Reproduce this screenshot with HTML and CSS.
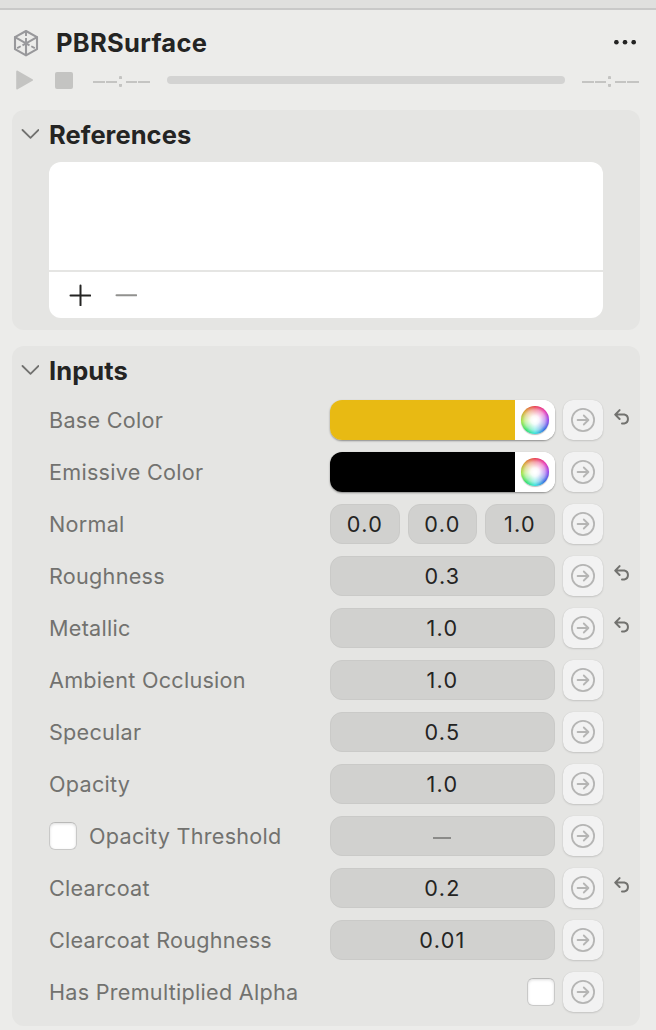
FILE: index.html
```html
<!DOCTYPE html>
<html lang="en">
<head>
<meta charset="utf-8">
<title>PBRSurface</title>
<link rel="stylesheet" href="styles.css">
</head>
<body>
<svg class="defs" aria-hidden="true">
  <symbol id="chevron" viewBox="0 0 18 12"><path d="M1.5 2 9.5 9.8 17.5 2"/></symbol>
  <symbol id="link" viewBox="0 0 24 24"><circle cx="12" cy="12" r="11.1"/><path d="M6.6 12H17.2M12.8 7.5 17.4 12 12.8 16.5"/></symbol>
  <symbol id="undo" viewBox="0 0 16 16"><path d="M5.6 1.1 1.2 5.6 5.6 10M1.4 5.6H10.3A4.6 4.6 0 0 1 10.3 14.6H8"/></symbol>
</svg>
<div class="topbar"></div>
<main class="inspector">
  <header class="header">
    <svg class="cube" viewBox="0 0 26 28"><path d="M13 2 24 8.2V20.2L13 26.4 2 20.2V8.2Z"/><path d="M2 8.2 13 14.4 24 8.2M13 14.4V26"/><path class="dash" d="M13 3V14M13 14.4 3 19.8M13 14.4 23 19.8"/></svg>
    <h1 class="title">PBRSurface</h1>
    <svg class="more" viewBox="0 0 24 6"><circle cx="3.4" cy="2.2" r="2.3"/><circle cx="12" cy="2.2" r="2.3"/><circle cx="20.7" cy="2.2" r="2.3"/></svg>
  </header>
  <div class="player">
    <svg class="play" viewBox="0 0 18 20"><path d="M2.2 1.5 17 10 2.2 18.5Z"/></svg>
    <span class="stop"></span>
    <span class="time"><i></i><i></i><b></b><i></i><i></i></span>
    <span class="track"></span>
    <span class="time"><i></i><i></i><b></b><i></i><i></i></span>
  </div>

  <section class="card references">
    <h2 class="heading"><svg class="chevron"><use href="#chevron"/></svg>References</h2>
    <div class="list">
      <div class="list-body"></div>
      <div class="list-tools">
        <svg class="plus" viewBox="0 0 22 22"><path d="M11.5 1.5V21.3M1.5 11.5H21.3"/></svg>
        <svg class="minus" viewBox="0 0 22 22"><path d="M1.5 11.2H21.3"/></svg>
      </div>
    </div>
  </section>

  <section class="card inputs">
    <h2 class="heading"><svg class="chevron"><use href="#chevron"/></svg>Inputs</h2>
    <div class="rows">
      <div class="row"><span class="label">Base Color</span><div class="well gold"><span class="picker"><span class="wheel"></span></span></div><span class="button"><svg><use href="#link"/></svg></span><svg class="undo"><use href="#undo"/></svg></div>
      <div class="row"><span class="label">Emissive Color</span><div class="well black"><span class="picker"><span class="wheel"></span></span></div><span class="button"><svg><use href="#link"/></svg></span></div>
      <div class="row"><span class="label">Normal</span><div class="vector"><span class="field">0.0</span><span class="field">0.0</span><span class="field">1.0</span></div><span class="button"><svg><use href="#link"/></svg></span></div>
      <div class="row"><span class="label">Roughness</span><span class="field">0.3</span><span class="button"><svg><use href="#link"/></svg></span><svg class="undo"><use href="#undo"/></svg></div>
      <div class="row"><span class="label">Metallic</span><span class="field">1.0</span><span class="button"><svg><use href="#link"/></svg></span><svg class="undo"><use href="#undo"/></svg></div>
      <div class="row"><span class="label">Ambient Occlusion</span><span class="field">1.0</span><span class="button"><svg><use href="#link"/></svg></span></div>
      <div class="row"><span class="label">Specular</span><span class="field">0.5</span><span class="button"><svg><use href="#link"/></svg></span></div>
      <div class="row"><span class="label">Opacity</span><span class="field">1.0</span><span class="button"><svg><use href="#link"/></svg></span></div>
      <div class="row"><span class="label"><span class="check"></span>Opacity Threshold</span><span class="field"><span class="empty"></span></span><span class="button"><svg><use href="#link"/></svg></span></div>
      <div class="row"><span class="label">Clearcoat</span><span class="field">0.2</span><span class="button"><svg><use href="#link"/></svg></span><svg class="undo"><use href="#undo"/></svg></div>
      <div class="row"><span class="label">Clearcoat Roughness</span><span class="field">0.01</span><span class="button"><svg><use href="#link"/></svg></span></div>
      <div class="row"><span class="label">Has Premultiplied Alpha</span><span class="check end"></span><span class="button"><svg><use href="#link"/></svg></span></div>
    </div>
  </section>
</main>
</body>
</html>
```
FILE: styles.css
```css
* { box-sizing: border-box; }
body {
  margin: 0;
  height: 1030px;
  overflow: hidden;
  background: #ececea;
  font-family: Inter, "Liberation Sans", sans-serif;
  color: #242423;
}
svg { display: block; flex: none; fill: none; stroke-linecap: round; stroke-linejoin: round; }
.defs { display: none; }
.topbar { height: 10px; background: #e0e0de; border-bottom: 2px solid #c9c9c8; }
.inspector { padding: 0 16px 0 12px; }

.header { display: flex; align-items: center; height: 66px; padding: 0 3px 0 1px; }
.cube { width: 26px; height: 28px; stroke: #98989b; stroke-width: 2.1; }
.cube .dash { stroke-width: 1.9; stroke-linecap: butt; stroke-dasharray: 4 2; }
.title { flex: 1; margin: 0 0 0 17px; font-size: 25.5px; line-height: 32px; font-weight: 650; letter-spacing: 0.3px; }
.more { width: 24px; height: 6px; fill: #242423; }

.player { display: flex; align-items: center; height: 8px; margin: 0 -15px 0 3px; }
.play { width: 18px; height: 20px; fill: #c4c4c2; stroke: #c4c4c2; stroke-width: 2; }
.stop { width: 18px; height: 17px; margin: 1px 20px 0 22px; border-radius: 2px; background: #c4c4c2; }
.time { display: flex; align-items: center; gap: 1px; width: 57px; height: 12px; margin-top: 3px; }
.time i { width: 12px; height: 2px; background: #c4c4c2; }
.time b { width: 3px; height: 11px; margin: 0 3px 0 1px; border: solid #c4c4c2; border-width: 3px 0; border-radius: 1px; }
.track { width: 398px; height: 8px; margin: 0 17px; border-radius: 4px; background: #d3d3d2; }

.card { border-radius: 12px; background: #e5e5e3; }
.references { height: 220px; margin-top: 26px; }
.inputs { height: 680px; margin-top: 16px; }
.heading { display: flex; align-items: center; height: 52px; margin: 0; padding: 0 0 4px 9px; font-size: 25.5px; font-weight: 650; letter-spacing: 0.05px; }
.chevron { width: 18px; height: 12px; margin: 0 10px 0 0; overflow: visible; stroke: #71716f; stroke-width: 1.8; }
.list { width: 554px; height: 156px; margin-left: 37px; border-radius: 12px; background: #fff; }
.list-body { height: 110px; border-bottom: 2px solid #e5e5e3; }
.list-tools { display: flex; align-items: center; gap: 24px; height: 46px; padding-left: 20px; }
.plus, .minus { width: 22px; height: 22px; stroke: #242423; stroke-width: 2; }
.minus { stroke: #91918f; }

.rows { display: flex; flex-direction: column; gap: 12px; padding: 2px 0 0 37px; }
.row { display: grid; grid-template-columns: 273px 225px 40px 16px; column-gap: 8px; align-items: center; height: 40px; margin-right: -16px; }
.label { display: flex; align-items: center; gap: 12px; font-size: 21.6px; letter-spacing: 0.27px; white-space: nowrap; color: #72726f; }
.field { display: flex; align-items: center; justify-content: center; height: 40px; border: 1px solid #cacac8; border-radius: 12px; background: #d1d1cf; font-size: 21.6px; letter-spacing: 1.3px; color: #242423; }
.vector { display: grid; grid-template-columns: 70px 69px 70px; gap: 8px; }
.empty { width: 18px; height: 2px; margin: 3px 2px 0 0; background: #8b8b89; }
.well { display: flex; justify-content: flex-end; height: 40px; overflow: hidden; border-radius: 12px; box-shadow: 0 1px 2px #0006; }
.gold { background: linear-gradient(90deg, #e8ba13 185px, #fff 185px); }
.black { background: linear-gradient(90deg, #000 185px, #fff 185px); }
.picker { display: flex; width: 40px; align-items: center; justify-content: center; background: #fff; }
.wheel { width: 28px; height: 28px; border-radius: 50%; background: radial-gradient(circle closest-side, #fff 10%, #fffffff0 30%, #ffffff88 72%, #ffffff00 100%), conic-gradient(#e83445, #e52bb0 50deg, #8a36e8 90deg, #2563e0 135deg, #2ae0da 180deg, #25df63 220deg, #9ae23b 265deg, #d79f29 310deg, #e83445); box-shadow: 0 1px 1px #0004; }
.button { display: grid; place-items: center; width: 40px; height: 40px; border-radius: 10px; background: #f2f2f2; box-shadow: 0 0 1px #0002, 0 1px 2px #0002; }
.button svg { width: 24px; height: 24px; stroke: #b5b5b4; stroke-width: 1.8; }
.undo { width: 16px; height: 16px; margin: -7px 0 0 3px; stroke: #72726f; stroke-width: 2; }
.check { flex: none; width: 28px; height: 28px; border: 1px solid #c9c9c8; border-top-color: #b9b9b8; border-radius: 6px; background: #fff; box-shadow: inset 0 1px 3px #0002; }
.end { justify-self: end; }
```
